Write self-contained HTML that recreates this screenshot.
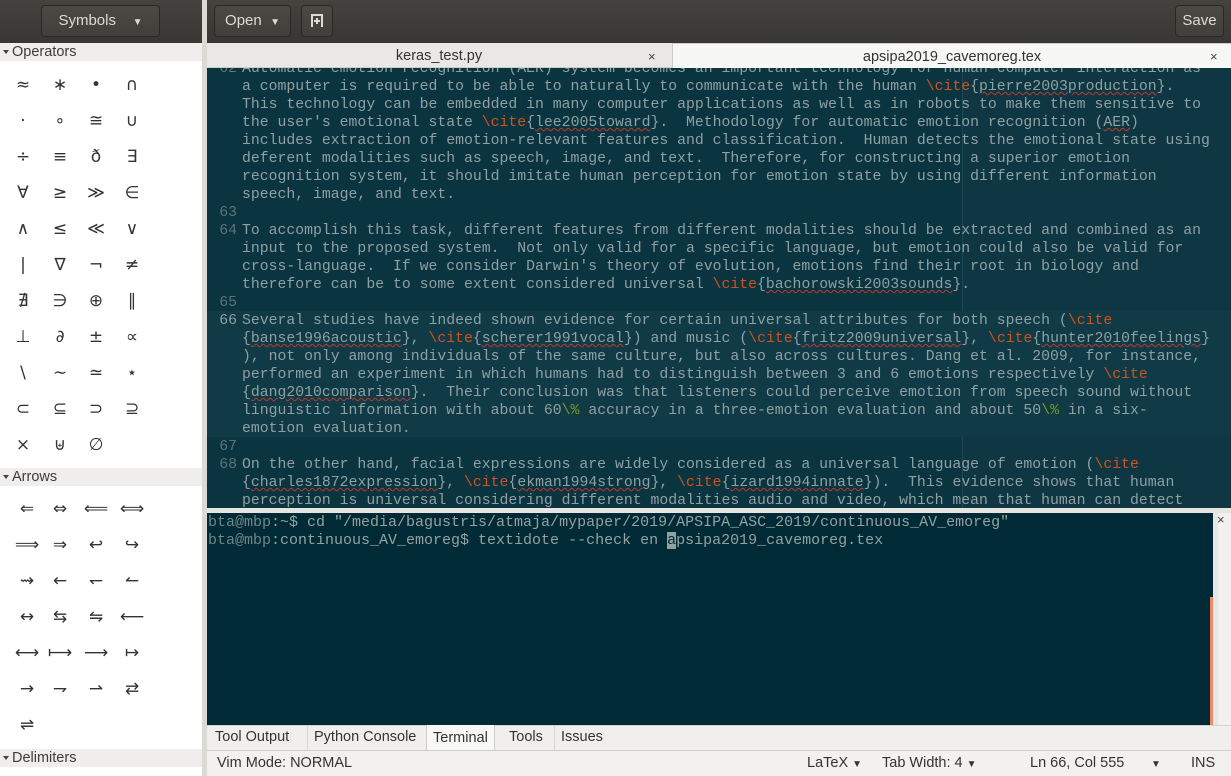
<!DOCTYPE html>
<html><head><meta charset="utf-8"><style>
*{margin:0;padding:0;box-sizing:border-box}
body{width:1231px;height:776px;overflow:hidden;background:#f2f1f0;font-family:"Liberation Sans","DejaVu Sans",sans-serif;position:relative}
.abs{position:absolute}
.hdr{background:linear-gradient(#43423e,#383733);height:43px;top:0}
.btn{position:absolute;border:1px solid #292825;border-radius:4px;background:linear-gradient(#4a4944,#403f3b);color:#dfdbd2;font-size:15px;line-height:30px;text-align:center}
.sym{position:absolute;width:30px;text-align:center;font-size:17px;color:#333;font-family:"DejaVu Sans",serif;line-height:20px}
.sec{position:absolute;left:0;width:202px;height:18px;background:#efeeec;color:#3c3c3c;font-size:14.5px;line-height:18px;padding-left:12px}
.sec:before{content:"";position:absolute;left:3px;top:7px;border-left:3px solid transparent;border-right:3px solid transparent;border-top:4px solid #444}
#ed{left:207px;top:68px;width:1024px;height:440px;background:#0a3440;overflow:hidden}
.row{position:absolute;left:0;height:18px;white-space:pre;font-family:"Liberation Mono",monospace;font-size:14.8px;line-height:18px;color:#8fa0a2}
.ln{position:absolute;left:0;width:30px;text-align:right;color:#5d7378}
.tx{position:absolute;left:35px}
.c{color:#d0531c}
.u{text-decoration:underline wavy #c0392b;text-decoration-thickness:1px}
.g{color:#7a9a1a}
#term{left:207px;top:513px;width:1006px;height:212px;background:#002b36;font-family:"Liberation Mono",monospace;font-size:15px;line-height:18px;color:#93a1a1;white-space:pre}
.tab{position:absolute;top:726px;height:24px;font-size:14.5px;color:#333;line-height:22px;padding:0 6px}
.st{position:absolute;top:755px;font-size:14.5px;color:#333}
</style></head><body>
<!-- header -->
<div class="abs hdr" style="left:0;width:202px"></div>
<div class="abs hdr" style="left:207px;width:1024px"></div>
<div class="abs" style="left:202px;top:0;width:5px;height:776px;background:#dcdad5"></div>
<div class="btn" style="left:41px;top:5px;width:119px;height:32px">Symbols&nbsp;&nbsp;&nbsp;&nbsp;<span style="font-size:10px">▼</span></div>
<div class="btn" style="left:214px;top:5px;width:77px;height:32px">Open&nbsp;&nbsp;<span style="font-size:10px">▼</span></div>
<div class="btn" style="left:301px;top:5px;width:32px;height:32px"><svg width="16" height="16" viewBox="0 0 16 16" style="margin-top:7px"><path d="M3 14V2h10v12M8 5v6M5 8h6" stroke="#dfdbd2" stroke-width="2" fill="none"/></svg></div>
<div class="btn" style="left:1175px;top:5px;width:49px;height:32px">Save</div>

<!-- sidebar -->
<div class="abs" style="left:0;top:43px;width:202px;height:733px;background:#fff"></div>
<div class="sec" style="top:43px">Operators</div>
<div class="sec" style="top:468px">Arrows</div>
<div class="sec" style="top:749px">Delimiters</div>
<div id="syms"></div>

<!-- tabs -->
<div class="abs" style="left:207px;top:43px;width:1024px;height:25px;background:#e9e8e6;border-bottom:1px solid #cfcdc9"></div>
<div class="abs" style="left:207px;top:43px;width:464px;height:25px;font-size:14.5px;color:#333;text-align:center;line-height:26px">keras_test.py</div>
<div class="abs" style="left:648px;top:49px;font-size:13px;color:#444">×</div>
<div class="abs" style="left:672px;top:43px;width:559px;height:25px;background:#f7f7f6;border-left:1px solid #cfcdc9;border-top:1px solid #cfcdc9;font-size:14.5px;color:#333;text-align:center;line-height:26px">apsipa2019_cavemoreg.tex</div>
<div class="abs" style="left:1210px;top:49px;font-size:13px;color:#444">×</div>

<!-- editor -->
<div id="ed" class="abs">
<div class="abs" style="left:755px;top:0;width:269px;height:440px;background:#0e3743;border-left:1px solid #1e4a55"></div>
<div class="abs" style="left:0;top:243px;width:1024px;height:126px;background:#0f3a46"></div>
<div class="row" style="top:-8px"><span class="ln">62</span><span class="tx">Automatic emotion recognition (AER) system becomes an important technology for human-computer interaction as</span></div>
<div class="row" style="top:10px"><span class="tx">a computer is required to be able to naturally to communicate with the human <span class="c">\cite</span>{<span class="u">pierre2003production</span>}. </span></div>
<div class="row" style="top:28px"><span class="tx">This technology can be embedded in many computer applications as well as in robots to make them sensitive to</span></div>
<div class="row" style="top:46px"><span class="tx">the user's emotional state <span class="c">\cite</span>{<span class="u">lee2005toward</span>}.  Methodology for automatic emotion recognition (<span class="u">AER</span>)</span></div>
<div class="row" style="top:64px"><span class="tx">includes extraction of emotion-relevant features and classification.  Human detects the emotional state using</span></div>
<div class="row" style="top:82px"><span class="tx">deferent modalities such as speech, image, and text.  Therefore, for constructing a superior emotion</span></div>
<div class="row" style="top:100px"><span class="tx">recognition system, it should imitate human perception for emotion state by using different information</span></div>
<div class="row" style="top:118px"><span class="tx">speech, image, and text.</span></div>
<div class="row" style="top:136px"><span class="ln">63</span></div>
<div class="row" style="top:154px"><span class="ln">64</span><span class="tx">To accomplish this task, different features from different modalities should be extracted and combined as an</span></div>
<div class="row" style="top:172px"><span class="tx">input to the proposed system.  Not only valid for a specific language, but emotion could also be valid for</span></div>
<div class="row" style="top:190px"><span class="tx">cross-language.  If we consider Darwin's theory of evolution, emotions find their root in biology and</span></div>
<div class="row" style="top:208px"><span class="tx">therefore can be to some extent considered universal <span class="c">\cite</span>{<span class="u">bachorowski2003sounds</span>}.</span></div>
<div class="row" style="top:226px"><span class="ln">65</span></div>
<div class="row" style="top:244px"><span class="ln" style="color:#8fa0a2">66</span><span class="tx">Several studies have indeed shown evidence for certain universal attributes for both speech (<span class="c">\cite</span></span></div>
<div class="row" style="top:262px"><span class="tx">{<span class="u">banse1996acoustic</span>}, <span class="c">\cite</span>{<span class="u">scherer1991vocal</span>}) and music (<span class="c">\cite</span>{<span class="u">fritz2009universal</span>}, <span class="c">\cite</span>{<span class="u">hunter2010feelings</span>}</span></div>
<div class="row" style="top:280px"><span class="tx">), not only among individuals of the same culture, but also across cultures. Dang et al. 2009, for instance,</span></div>
<div class="row" style="top:298px"><span class="tx">performed an experiment in which humans had to distinguish between 3 and 6 emotions respectively <span class="c">\cite</span></span></div>
<div class="row" style="top:316px"><span class="tx">{<span class="u">dang2010comparison</span>}.  Their conclusion was that listeners could perceive emotion from speech sound without</span></div>
<div class="row" style="top:334px"><span class="tx">linguistic information with about 60<span class="g">\%</span> accuracy in a three-emotion evaluation and about 50<span class="g">\%</span> in a six-</span></div>
<div class="row" style="top:352px"><span class="tx">emotion evaluation.</span></div>
<div class="row" style="top:370px"><span class="ln">67</span></div>
<div class="row" style="top:388px"><span class="ln">68</span><span class="tx">On the other hand, facial expressions are widely considered as a universal language of emotion (<span class="c">\cite</span></span></div>
<div class="row" style="top:406px"><span class="tx">{<span class="u">charles1872expression</span>}, <span class="c">\cite</span>{<span class="u">ekman1994strong</span>}, <span class="c">\cite</span>{<span class="u">izard1994innate</span>}).  This evidence shows that human</span></div>
<div class="row" style="top:424px"><span class="tx">perception is universal considering different modalities audio and video, which mean that human can detect</span></div>
</div>
<div class="abs" style="left:207px;top:508px;width:1024px;height:5px;background:#e6e5e2"></div>

<!-- terminal -->
<div id="term" class="abs"><div style="position:absolute;left:1px;top:1px"><span style="color:#6f8588">bta@mbp</span>:~$ cd "/media/bagustris/atmaja/mypaper/2019/APSIPA_ASC_2019/continuous_AV_emoreg"
<span style="color:#6f8588">bta@mbp</span>:continuous_AV_emoreg$ textidote --check en <span style="background:#93a1a1;color:#002b36">a</span>psipa2019_cavemoreg.tex</div></div>
<div class="abs" style="left:1213px;top:513px;width:5px;height:212px;background:#e8e7e5"></div>
<div class="abs" style="left:1210px;top:597px;width:3px;height:128px;background:#ee8a66"></div>
<div class="abs" style="left:1217px;top:512px;font-size:13px;color:#444">×</div>

<!-- bottom tabs -->
<div class="abs" style="left:207px;top:725px;width:1024px;height:26px;background:#f0efed;border-top:1px solid #d5d3cf;border-bottom:1px solid #cfcdc9"></div>
<div class="tab" style="left:209px">Tool Output</div>
<div class="tab" style="left:307px;border-left:1px solid #d8d6d2">Python Console</div>
<div class="tab" style="left:426px;background:#f8f8f7;border:1px solid #cfcdc9;border-top:none;top:725px;height:26px;line-height:26px">Terminal</div>
<div class="tab" style="left:503px">Tools</div>
<div class="tab" style="left:554px;border-left:1px solid #d8d6d2">Issues</div>

<!-- status -->
<div class="st" style="left:217px">Vim Mode: NORMAL</div>
<div class="st" style="left:807px">LaTeX <span style="font-size:10px">▼</span></div>
<div class="st" style="left:882px">Tab Width: 4 <span style="font-size:10px">▼</span></div>
<div class="st" style="left:1030px">Ln 66, Col 555</div>
<div class="st" style="left:1151px;font-size:10px;top:759px">▼</div>
<div class="st" style="left:1191px">INS</div>

<script>
var ops=["≈∗•∩","·∘≅∪","÷≡ð∃","∀≥≫∈","∧≤≪∨","|∇¬≠","∄∋⊕∥","⊥∂±∝","\\∼≃⋆","⊂⊆⊃⊇","×⊎∅"];
var arr=[["⇐","⇔","⟸","⟺"],["⟹","⇒","↩","↪"],["⇝","←","↽","↼"],["↔","⇆","⇋","⟵"],["⟷","⟼","⟶","↦"],["→","⇁","⇀","⇄"],["⇌"]];
var cx=[23,60,96,132],h="";
ops.forEach(function(r,i){Array.from(r).forEach(function(s,j){h+='<div class="sym" style="left:'+(cx[j]-15)+'px;top:'+(75+36*i)+'px">'+s+'</div>';});});
arr.forEach(function(r,i){r.forEach(function(s,j){h+='<div class="sym" style="left:'+(cx[j]-15+(j==0?4:0))+'px;top:'+(499+36*i)+'px;width:'+(j==0?30:30)+'px">'+s+'</div>';});});
document.getElementById("syms").innerHTML=h;
</script>
</body></html>
